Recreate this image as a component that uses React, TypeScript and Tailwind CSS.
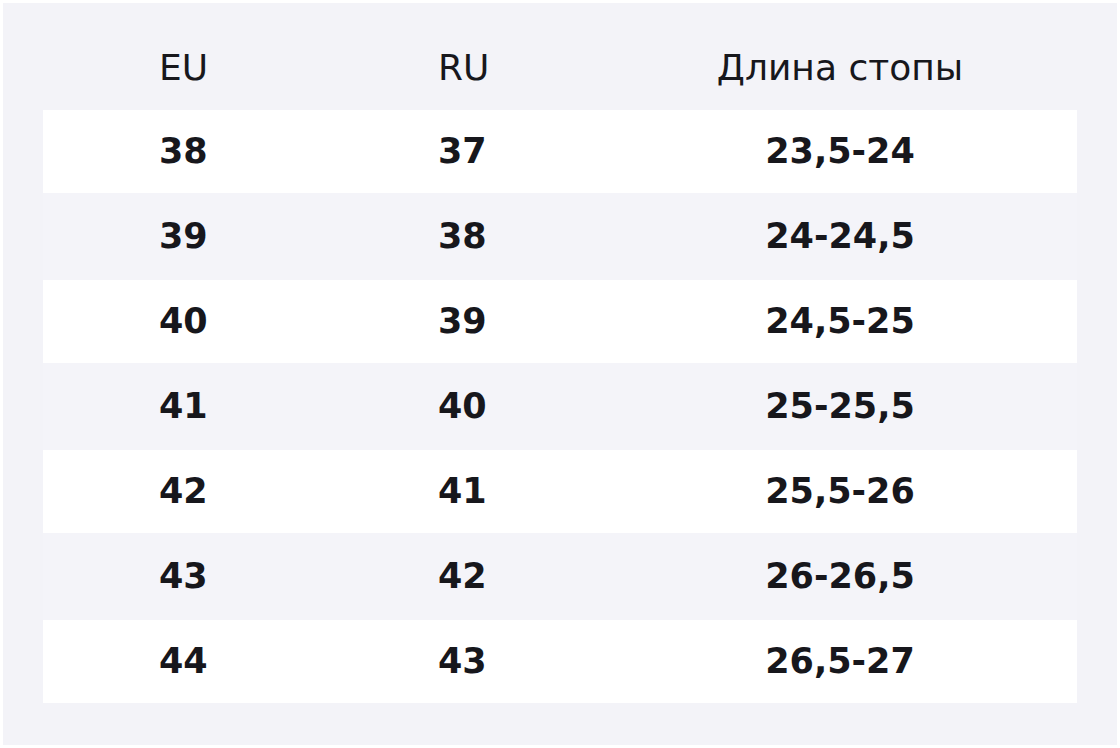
const rows = [
  ['38', '37', '23,5-24'],
  ['39', '38', '24-24,5'],
  ['40', '39', '24,5-25'],
  ['41', '40', '25-25,5'],
  ['42', '41', '25,5-26'],
  ['43', '42', '26-26,5'],
  ['44', '43', '26,5-27'],
];

export default function App() {
  return (
    <div className="w-[1120px] h-[748px] bg-white p-[3px] font-['DejaVu_Sans',sans-serif] text-[#17171c]">
      <div className="h-full bg-[#f3f3f8] pt-[22px] px-[40px]">
        <div className="grid grid-cols-[280px_280px_1fr] h-[85px] items-center text-[36px]">
          <div className="pl-[116px]">EU</div>
          <div className="pl-[115px]">RU</div>
          <div className="text-center">Длина стопы</div>
        </div>
        {rows.map((r, i) => (
          <div
            key={r[0]}
            className={
              'grid grid-cols-[280px_280px_1fr] items-center text-[35px] font-bold ' +
              (i % 2 === 0 ? 'bg-white h-[83px]' : 'bg-[#f4f4f9] h-[87px]')
            }
          >
            <div className="pl-[116px]">{r[0]}</div>
            <div className="pl-[115px]">{r[1]}</div>
            <div className="text-center">{r[2]}</div>
          </div>
        ))}
      </div>
    </div>
  );
}
